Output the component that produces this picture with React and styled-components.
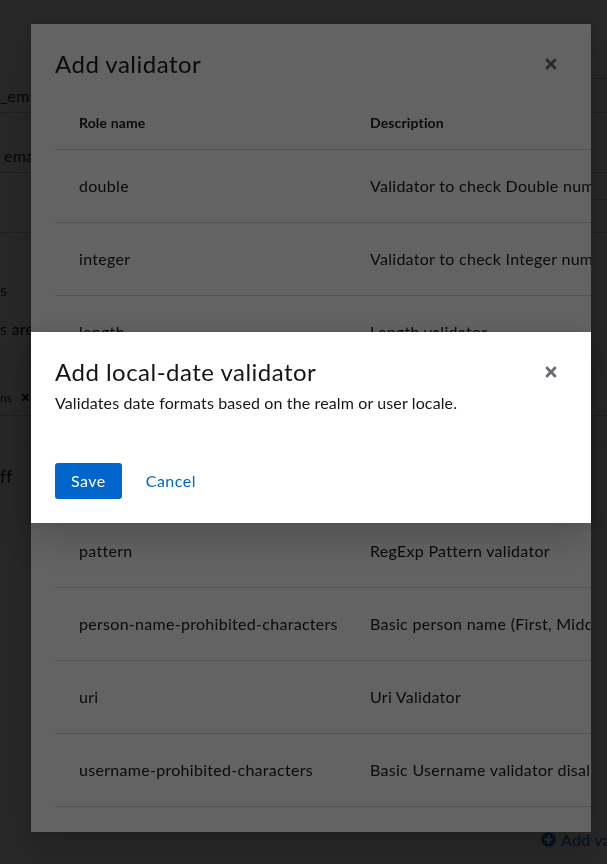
import React from 'react';
import styled, { createGlobalStyle } from 'styled-components';
import { FaTimes, FaPlusCircle } from 'react-icons/fa';

const GlobalStyle = createGlobalStyle`
  html, body {
    margin: 0;
    padding: 0;
  }
  body {
    font-family: Lato, "Liberation Sans", sans-serif;
    color: #151515;
    background: #fff;
  }
  * {
    box-sizing: border-box;
  }
`;

// page underneath the modals
const Page = styled.div`
  width: 607px;
  height: 864px;
  overflow: hidden;
  background: #fff;
  display: flex;
  flex-direction: column;
`;

const BgRow = styled.div`
  flex: none;
  height: ${(p) => p.$h}px;
  display: flex;
  align-items: ${(p) => p.$align || 'center'};
  padding-left: ${(p) => p.$indent || 0}px;
  padding-bottom: ${(p) => p.$pb || 0}px;
  border-bottom: 1px solid
    ${(p) => (p.$rule === 'light' ? '#ededed' : p.$rule === 'none' ? 'transparent' : '#b8bbbe')};
`;

const PartialRule = styled.div`
  flex: none;
  height: 1px;
  margin-left: 340px;
  background: #b8bbbe;
`;

const BgText = styled.span`
  font-size: ${(p) => p.$size || 16}px;
  line-height: 1.5;
  letter-spacing: 0.015em;
  white-space: nowrap;
`;

const BgStack = styled.div`
  flex: none;
  height: ${(p) => p.$h}px;
  display: flex;
  flex-direction: column;
  padding-top: 20px;
  gap: 15px;
  border-bottom: 1px solid #b8bbbe;
`;

const Chip = styled.span`
  display: inline-flex;
  align-items: center;
  gap: 8px;
  margin-top: 34px;
  font-size: 12px;
  color: #151515;

  svg {
    flex: none;
    font-size: 11px;
  }
`;

const AddLink = styled.div`
  margin-top: auto;
  margin-bottom: 15px;
  padding-left: 541px;
  display: flex;
  align-items: center;
  gap: 5px;
  color: #0066cc;
  font-size: 16px;
  letter-spacing: 0.015em;
  white-space: nowrap;

  svg {
    flex: none;
    font-size: 15px;
  }
`;

// modal layers
const Backdrop = styled.div`
  position: fixed;
  inset: 0;
  background: rgba(3, 3, 3, 0.62);
  display: flex;
  align-items: flex-start;
  padding-top: ${(p) => p.$top}px;
  padding-left: 31px;
`;

const ModalBox = styled.div`
  width: 560px;
  background: #fff;
  overflow: hidden;
  box-shadow: 0 1rem 2rem 0 rgba(3, 3, 3, 0.16), 0 0 0.5rem 0 rgba(3, 3, 3, 0.1);
  padding-bottom: ${(p) => p.$pb || 24}px;
`;

const ModalHeader = styled.div`
  display: flex;
  align-items: center;
  justify-content: space-between;
  padding: 24px 16px 0 24px;
`;

const ModalTitle = styled.h1`
  margin: 0;
  font-size: 24px;
  line-height: 1.3;
  font-weight: 400;
  letter-spacing: 0.02em;
  color: #151515;
`;

const CloseButton = styled.button`
  border: 0;
  background: none;
  padding: 6px 16px;
  display: flex;
  align-items: center;
  color: #6a6e73;
  font-size: 16px;
  cursor: pointer;
`;

const Description = styled.p`
  margin: 4px 0 0;
  padding: 0 24px;
  font-size: 16px;
  line-height: 1.5;
  letter-spacing: 0.008em;
`;

const TableWrap = styled.div`
  margin-top: 17px;
  padding-left: 24px;
`;

const Table = styled.table`
  width: 780px;
  table-layout: fixed;
  border-collapse: collapse;
`;

const Th = styled.th`
  text-align: left;
  font-size: 14px;
  font-weight: 700;
  line-height: 1.5;
  letter-spacing: 0.01em;
  padding: 16px 16px;
  white-space: nowrap;
  border-bottom: 1px solid #d2d2d2;

  &:first-child {
    width: 299px;
    padding-left: 24px;
  }
`;

const Td = styled.td`
  font-size: 16px;
  line-height: 24px;
  letter-spacing: 0.018em;
  padding: 24px 16px;
  white-space: nowrap;
  border-bottom: 1px solid #d2d2d2;

  &:first-child {
    padding-left: 24px;
  }
`;

const Footer = styled.div`
  display: flex;
  align-items: center;
  gap: 8px;
  padding: 48px 24px 0;
`;

const Button = styled.button`
  font-family: inherit;
  font-size: 16px;
  line-height: 24px;
  letter-spacing: 0.03em;
  padding: 6px 16px;
  border: 0;
  border-radius: 3px;
  cursor: pointer;
  background: ${(p) => (p.$variant === 'link' ? 'transparent' : '#0066cc')};
  color: ${(p) => (p.$variant === 'link' ? '#0066cc' : '#fff')};
`;

const validators = [
  ['double', 'Validator to check Double number format and optionally min and max boundaries'],
  ['integer', 'Validator to check Integer number format and optionally min and max boundaries'],
  ['length', 'Length validator'],
  ['local-date', 'Validates date formats based on the realm or user locale.'],
  ['options', 'Validator to check whether given value is one of the allowed options'],
  ['pattern', 'RegExp Pattern validator'],
  [
    'person-name-prohibited-characters',
    'Basic person name (First, Middle, Last) validator disallowing some characters dangerous for XSS attacks',
  ],
  ['uri', 'Uri Validator'],
  [
    'username-prohibited-characters',
    'Basic Username validator disallowing some characters dangerous for XSS attacks or filesystem',
  ],
];

const App = () => (
  <>
    <GlobalStyle />
    <Page>
      <BgRow $h={78} $rule="none" />
      <PartialRule />
      <BgRow $h={34}>
        <BgText>_email</BgText>
      </BgRow>
      <BgRow $h={60} $indent={4} $align="flex-end" $pb={4}>
        <BgText>email</BgText>
      </BgRow>
      <BgRow $h={26} $rule="none" />
      <PartialRule />
      <BgRow $h={33} />
      <BgRow $h={25} $rule="light" />
      <BgStack $h={158}>
        <BgText>s</BgText>
        <BgText>s are required</BgText>
        <Chip>
          ns <FaTimes />
        </Chip>
      </BgStack>
      <BgRow $h={25} $rule="light" />
      <BgRow $h={72} $rule="none">
        <BgText $size={17}>ff</BgText>
      </BgRow>
      <AddLink>
        <FaPlusCircle /> Add validator
      </AddLink>
    </Page>

    <Backdrop $top={24}>
      <ModalBox $pb={25}>
        <ModalHeader>
          <ModalTitle>Add validator</ModalTitle>
          <CloseButton aria-label="Close">
            <FaTimes />
          </CloseButton>
        </ModalHeader>
        <TableWrap>
          <Table>
            <thead>
              <tr>
                <Th>Role name</Th>
                <Th>Description</Th>
              </tr>
            </thead>
            <tbody>
              {validators.map(([name, desc]) => (
                <tr key={name}>
                  <Td>{name}</Td>
                  <Td>{desc}</Td>
                </tr>
              ))}
            </tbody>
          </Table>
        </TableWrap>
      </ModalBox>
    </Backdrop>

    <Backdrop $top={332}>
      <ModalBox>
        <ModalHeader>
          <ModalTitle>Add local-date validator</ModalTitle>
          <CloseButton aria-label="Close">
            <FaTimes />
          </CloseButton>
        </ModalHeader>
        <Description>Validates date formats based on the realm or user locale.</Description>
        <Footer>
          <Button>Save</Button>
          <Button $variant="link">Cancel</Button>
        </Footer>
      </ModalBox>
    </Backdrop>
  </>
);

export default App;
